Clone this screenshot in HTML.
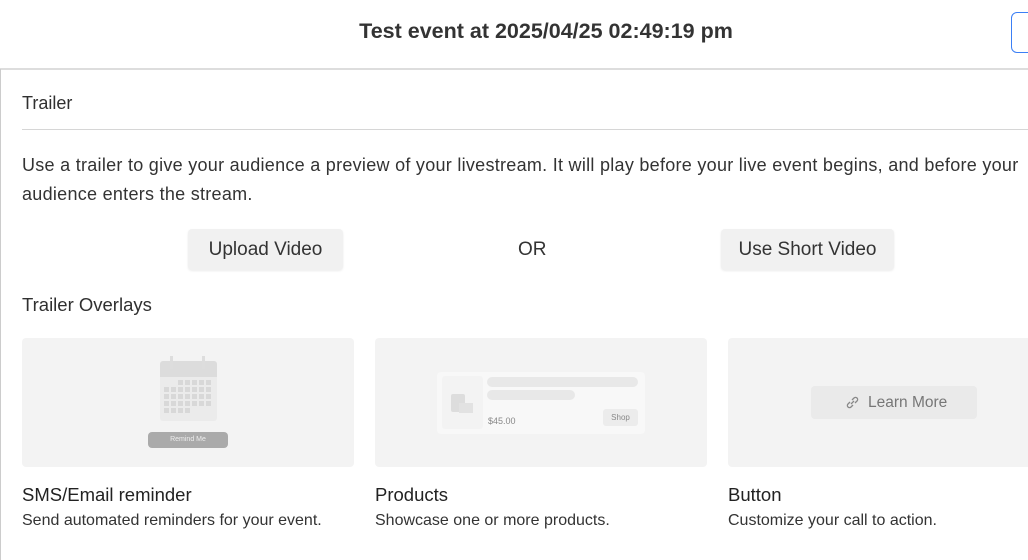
<!DOCTYPE html>
<html><head><style>
*{margin:0;padding:0;box-sizing:border-box}
body{width:1028px;height:560px;overflow:hidden;background:#fff;font-family:"Liberation Sans",sans-serif;color:#303030;position:relative}
.a{position:absolute}
.btn{position:absolute;background:#f1f1f1;border-radius:4px;font-size:19px;color:#333;display:flex;align-items:center;justify-content:center;box-shadow:0 1px 2px rgba(0,0,0,.08)}
.card{position:absolute;top:338px;width:332px;height:129px;background:#f3f3f3;border-radius:4px}
.t{position:absolute;top:484px;font-size:18.5px;color:#222}
.d{position:absolute;top:512px;font-size:16px;color:#333}
</style></head><body>
<div class="a" style="left:0;top:19px;width:1092px;text-align:center;font-size:21.5px;font-weight:bold;color:#333">Test event at 2025/04/25 02:49:19 pm</div>
<div class="a" style="left:1011px;top:12px;width:40px;height:41px;border:1.5px solid #3b7ff5;border-radius:6px"></div>
<div class="a" style="left:0;top:68px;width:1028px;height:2px;background:#ddd"></div>
<div class="a" style="left:0;top:69px;width:1px;height:491px;background:#ccc"></div>
<div class="a" style="left:22px;top:93px;font-size:18px">Trailer</div>
<div class="a" style="left:22px;top:129px;width:1006px;height:1px;background:#d6d6d6"></div>
<div class="a" style="left:22px;top:151px;width:1006px;font-size:18px;line-height:29px;color:#333;letter-spacing:0.28px">Use a trailer to give your audience a preview of your livestream. It will play before your live event begins, and before your audience enters the stream.</div>
<div class="btn" style="left:188px;top:229px;width:155px;height:41px">Upload Video</div>
<div class="a" style="left:518px;top:239px;font-size:19px;color:#333">OR</div>
<div class="btn" style="left:721px;top:229px;width:173px;height:41px">Use Short Video</div>
<div class="a" style="left:22px;top:294px;font-size:18.5px">Trailer Overlays</div>

<div class="card" style="left:22px">
 <div class="a" style="left:138px;top:23px;width:57px;height:60px;background:#ebebeb;border-radius:3px"></div>
 <div class="a" style="left:138px;top:23px;width:57px;height:16px;background:#dcdcdc;border-radius:3px 3px 0 0"></div>
 <div class="a" style="left:148px;top:18px;width:3px;height:13px;background:#ddd"></div>
 <div class="a" style="left:180px;top:18px;width:3px;height:13px;background:#ddd"></div>
 <svg class="a" style="left:142px;top:42px" width="50" height="38">
  <g fill="#d8d8d8">
  <rect x="14" y="0" width="5" height="5"/><rect x="21" y="0" width="5" height="5"/><rect x="28" y="0" width="5" height="5"/><rect x="35" y="0" width="5" height="5"/><rect x="42" y="0" width="5" height="5"/>
  <rect x="0" y="7" width="5" height="5"/><rect x="7" y="7" width="5" height="5"/><rect x="14" y="7" width="5" height="5"/><rect x="21" y="7" width="5" height="5"/><rect x="28" y="7" width="5" height="5"/><rect x="35" y="7" width="5" height="5"/><rect x="42" y="7" width="5" height="5"/>
  <rect x="0" y="14" width="5" height="5"/><rect x="7" y="14" width="5" height="5"/><rect x="14" y="14" width="5" height="5"/><rect x="21" y="14" width="5" height="5"/><rect x="28" y="14" width="5" height="5"/><rect x="35" y="14" width="5" height="5"/><rect x="42" y="14" width="5" height="5"/>
  <rect x="0" y="21" width="5" height="5"/><rect x="7" y="21" width="5" height="5"/><rect x="14" y="21" width="5" height="5"/><rect x="21" y="21" width="5" height="5"/><rect x="28" y="21" width="5" height="5"/><rect x="35" y="21" width="5" height="5"/><rect x="42" y="21" width="5" height="5"/>
  <rect x="0" y="28" width="5" height="5"/><rect x="7" y="28" width="5" height="5"/><rect x="14" y="28" width="5" height="5"/><rect x="21" y="28" width="5" height="5"/>
  </g></svg>
 <div class="a" style="left:126px;top:94px;width:80px;height:16px;background:#aaa;border-radius:4px;color:#eee;font-size:7px;text-align:center;line-height:16px">Remind Me</div>
</div>
<div class="card" style="left:375px">
 <div class="a" style="left:62px;top:34px;width:208px;height:62px;background:#f8f8f8;border-radius:4px"></div>
 <div class="a" style="left:67px;top:38px;width:41px;height:53px;background:#f3f3f3;border-radius:3px"></div>
 <div class="a" style="left:76px;top:56px;width:14px;height:18px;background:#ddd;border-radius:2px"></div>
 <div class="a" style="left:84px;top:65px;width:14px;height:10px;background:#e2e2e2"></div>
 <div class="a" style="left:112px;top:39px;width:151px;height:10px;background:#e8e8e8;border-radius:5px"></div>
 <div class="a" style="left:112px;top:52px;width:88px;height:10px;background:#e8e8e8;border-radius:5px"></div>
 <div class="a" style="left:113px;top:78px;font-size:9px;color:#888">$45.00</div>
 <div class="a" style="left:228px;top:71px;width:35px;height:17px;background:#ececec;border-radius:3px;font-size:8px;color:#888;text-align:center;line-height:17px">Shop</div>
</div>
<div class="card" style="left:728px;width:310px">
 <div class="a" style="left:83px;top:48px;width:166px;height:33px;background:#eaeaea;border-radius:4px;font-size:15.5px;color:#777;line-height:33px;padding-left:57px">Learn More</div>
 <svg class="a" style="left:117px;top:57px" width="15" height="15" viewBox="0 0 15 15" fill="none" stroke="#888" stroke-width="1.3"><path d="M6 9l3-3M5 7l-2 2a2.1 2.1 0 003 3l2-2M10 8l2-2a2.1 2.1 0 00-3-3L7 5"/></svg>
</div>
<div class="t" style="left:22px">SMS/Email reminder</div>
<div class="d" style="left:22px">Send automated reminders for your event.</div>
<div class="t" style="left:375px">Products</div>
<div class="d" style="left:375px">Showcase one or more products.</div>
<div class="t" style="left:728px">Button</div>
<div class="d" style="left:728px">Customize your call to action.</div>
</body></html>
